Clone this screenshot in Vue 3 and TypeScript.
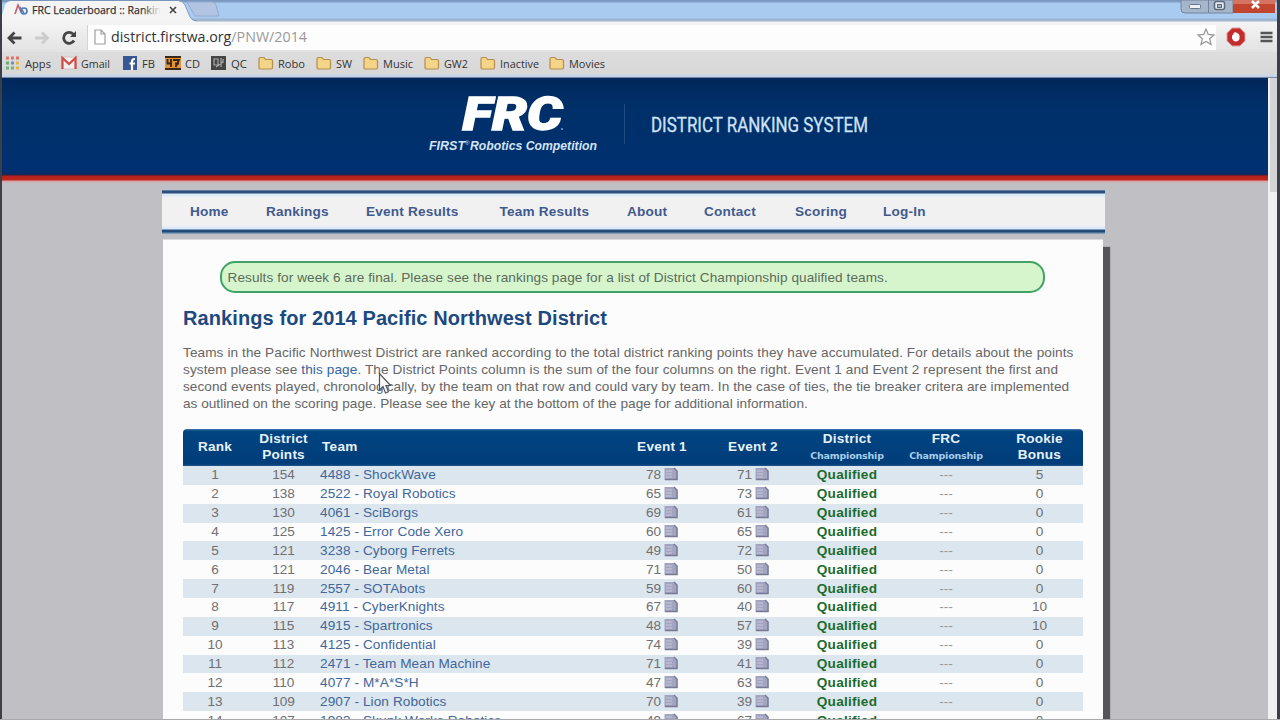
<script setup lang="ts">
interface Bookmark {
  label: string
  icon: 'apps' | 'gmail' | 'fb' | 'cd' | 'qc' | 'folder'
  slot: number
  text: number
}

interface NavItem {
  label: string
  slot: number
}

interface Row {
  points: number
  team: string
  e1: number
  e2: number
  bonus: number
}

const bookmarks: Bookmark[] = [
  { label: 'Apps', icon: 'apps', slot: 56, text: 26 },
  { label: 'Gmail', icon: 'gmail', slot: 61, text: 29 },
  { label: 'FB', icon: 'fb', slot: 43, text: 13 },
  { label: 'CD', icon: 'cd', slot: 46, text: 15 },
  { label: 'QC', icon: 'qc', slot: 47, text: 16 },
  { label: 'Robo', icon: 'folder', slot: 58, text: 27 },
  { label: 'SW', icon: 'folder', slot: 47, text: 16 },
  { label: 'Music', icon: 'folder', slot: 61, text: 30 },
  { label: 'GW2', icon: 'folder', slot: 56, text: 24 },
  { label: 'Inactive', icon: 'folder', slot: 69, text: 39 },
  { label: 'Movies', icon: 'folder', slot: 60, text: 36 },
]

const nav: NavItem[] = [
  { label: 'Home', slot: 76 },
  { label: 'Rankings', slot: 100 },
  { label: 'Event Results', slot: 133.5 },
  { label: 'Team Results', slot: 127.5 },
  { label: 'About', slot: 77 },
  { label: 'Contact', slot: 91 },
  { label: 'Scoring', slot: 88 },
  { label: 'Log-In', slot: 60 },
]

const rows: Row[] = [
  { points: 154, team: '4488 - ShockWave', e1: 78, e2: 71, bonus: 5 },
  { points: 138, team: '2522 - Royal Robotics', e1: 65, e2: 73, bonus: 0 },
  { points: 130, team: '4061 - SciBorgs', e1: 69, e2: 61, bonus: 0 },
  { points: 125, team: '1425 - Error Code Xero', e1: 60, e2: 65, bonus: 0 },
  { points: 121, team: '3238 - Cyborg Ferrets', e1: 49, e2: 72, bonus: 0 },
  { points: 121, team: '2046 - Bear Metal', e1: 71, e2: 50, bonus: 0 },
  { points: 119, team: '2557 - SOTAbots', e1: 59, e2: 60, bonus: 0 },
  { points: 117, team: '4911 - CyberKnights', e1: 67, e2: 40, bonus: 10 },
  { points: 115, team: '4915 - Spartronics', e1: 48, e2: 57, bonus: 10 },
  { points: 113, team: '4125 - Confidential', e1: 74, e2: 39, bonus: 0 },
  { points: 112, team: '2471 - Team Mean Machine', e1: 71, e2: 41, bonus: 0 },
  { points: 110, team: '4077 - M*A*S*H', e1: 47, e2: 63, bonus: 0 },
  { points: 109, team: '2907 - Lion Robotics', e1: 70, e2: 39, bonus: 0 },
  { points: 107, team: '1983 - Skunk Works Robotics', e1: 49, e2: 67, bonus: 0 },
]
</script>

<template>
  <div class="window">
    <div class="titlebar">
      <svg class="tabs" width="230" height="22" viewBox="0 0 230 22">
        <path d="M187 2 H212 Q215 2 216 5 L219 16 H195 Z" fill="#b3c4e2" stroke="#93abd0" stroke-width="1" />
        <path d="M0 22 L5 5 Q7 1 11 1 H179 Q183 1 185 5 L190 17 Q192 21 197 22 Z" fill="#f5f4f4" />
        <path d="M179 1 Q183 1 185 5 L190 17 Q192 21 197 21" fill="none" stroke="#7f9fc0" stroke-width="1" />
        <g fill="none" stroke-width="1.6">
          <path d="M15 14 L18 5 L21 12" stroke="#cf5a66" />
          <circle cx="24" cy="11" r="3" stroke="#4878b8" />
          <path d="M20 7 L24 13" stroke="#6a7fae" />
        </g>
        <text x="32" y="13.5" textLength="129" lengthAdjust="spacingAndGlyphs" class="tabtext">FRC Leaderboard :: Rankin</text>
        <rect x="142" y="2" width="22" height="17" fill="url(#tabfade)" />
        <path d="M170 7 L176 13 M176 7 L170 13" stroke="#444" stroke-width="1.6" />
        <defs>
          <linearGradient id="tabfade">
            <stop offset="0" stop-color="#f5f4f4" stop-opacity="0" />
            <stop offset="0.85" stop-color="#f5f4f4" />
          </linearGradient>
        </defs>
      </svg>
      <svg class="controls" width="97" height="15" viewBox="0 0 97 15">
        <path d="M0 0 H52 V13 H4 Q0 13 0 9 Z" fill="#a5b5ca" stroke="#75849b" />
        <path d="M27.5 0 V13" stroke="#75849b" />
        <rect x="8.500" y="4.500" width="11" height="4" rx="1" fill="#eef2f7" stroke="#6a768a" />
        <rect x="33.500" y="1.500" width="10" height="8" rx="2" fill="#e6ebf2" stroke="#5e697c" stroke-width="1.500" />
        <rect x="36.500" y="4.500" width="4" height="3" fill="#a5b5ca" stroke="#5e697c" />
        <path d="M52 0 H94 V13 H52 Z" fill="#c2452f" />
        <path d="M52 0 H94 V4 H52 Z" fill="#d47461" />
        <path d="M71 1 L78 8 M78 1 L71 8" stroke="#fff" stroke-width="2.500" />
      </svg>
    </div>

    <div class="toolbar">
      <svg class="navicons" width="88" height="26" viewBox="0 0 88 26">
        <g fill="none" stroke-width="2.800">
          <path d="M22.500 13 H10 M15.500 7.500 L10 13 L15.500 18.500" stroke="#444" />
          <path d="M36 13 H48 M43 7.500 L48.500 13 L43 18.500" stroke="#ccc" />
          <path d="M74.500 9.500 A5.500 5.500 0 1 0 75 15.500" stroke="#444" />
        </g>
        <path d="M71 12 H77 V6 Z" fill="#444" />
      </svg>
      <div class="omnibox">
        <svg class="pageicon" width="12" height="16" viewBox="0 0 12 16">
          <path d="M1 1 H7 L11 5 V15 H1 Z M7 1 V5 H11" fill="#fff" stroke="#a0a0a0" stroke-width="1.200" />
        </svg>
        <svg class="url" width="200" height="22" viewBox="0 0 200 22">
          <text x="0" y="16" textLength="196" lengthAdjust="spacingAndGlyphs">district.firstwa.org<tspan fill="#999">/PNW/2014</tspan></text>
        </svg>
        <svg class="star" width="18" height="18" viewBox="0 0 18 18">
          <path d="M9 1.200 L11.300 6.400 L17 7 L12.700 10.800 L14 16.400 L9 13.500 L4 16.400 L5.300 10.800 L1 7 L6.700 6.400 Z" fill="#fff" stroke="#999" stroke-width="1.300" />
        </svg>
      </div>
      <svg class="exticons" width="60" height="26" viewBox="0 0 60 26">
        <path d="M15.200 4 H22.800 L28 9.200 V16.800 L22.800 22 H15.200 L10 16.800 V9.200 Z" fill="#c32b2d" stroke="#dda0a0" />
        <path d="M15 12.500 Q15 10.500 16.500 10.500 V9 Q18.500 7.500 20 9 Q22.500 9.500 22.500 12 V15 Q21.500 17.500 18.500 17.500 Q16 17 15 14.500 Z" fill="#fff" />
        <path d="M43.500 9 H55.500 M43.500 13 H55.500 M43.500 17 H55.500" stroke="#555" stroke-width="2.600" />
      </svg>
    </div>

    <div class="bookmarks">
      <div v-for="b in bookmarks" :key="b.label" class="bookmark" :style="{ width: b.slot + 'px' }">
        <svg width="16" height="16" viewBox="0 0 16 16">
          <g v-if="b.icon === 'apps'">
            <path d="M1 3 H4 M6 3 H9 M11 3 H14" stroke="#d87468" stroke-width="3" />
            <path d="M1 8 H4" stroke="#6daa72" stroke-width="3" />
            <path d="M6 8 H9" stroke="#6f8fc7" stroke-width="3" />
            <path d="M11 8 H14" stroke="#e2b64d" stroke-width="3" />
            <path d="M1 13 H9" stroke="#75af76" stroke-width="3" stroke-dasharray="3 2" />
            <path d="M11 13 H14" stroke="#e2b64d" stroke-width="3" />
          </g>
          <g v-else-if="b.icon === 'gmail'">
            <rect x="0.500" y="2" width="15" height="12" fill="#f4eeee" stroke="#cfc5c5" />
            <path d="M1.500 14 V3 L8 9 L14.500 3 V14" fill="none" stroke="#d34b47" stroke-width="2.200" />
          </g>
          <g v-else-if="b.icon === 'fb'">
            <rect x="1" y="1" width="14" height="14" fill="#3a5795" />
            <path d="M10 15 V6.500 Q10 4 13 4 M7.500 8.500 H13" fill="none" stroke="#fff" stroke-width="2.200" />
          </g>
          <g v-else-if="b.icon === 'cd'">
            <rect x="0" y="1" width="16" height="14" fill="#e29437" />
            <path d="M0 2 H16 M0 14 H16" stroke="#3a2717" stroke-width="2" />
            <path d="M2.500 4 V8.500 H7 M6 4 V12 M8 5 H14 L10.500 12 M10 8.500 H14" fill="none" stroke="#3a2717" stroke-width="1.900" />
          </g>
          <g v-else-if="b.icon === 'qc'">
            <rect x="0" y="1" width="15" height="14" fill="#454545" />
            <path d="M3 4 H7 V10 H3 Z M10 3 V12 M5 12 L12 7 M12 4 V8" fill="none" stroke="#aaa" stroke-width="1.200" />
          </g>
          <g v-else>
            <path d="M1 13 V4 Q1 2.500 2.500 2.500 H6 L7.500 4.500 H13 Q14.500 4.500 14.500 6 V12.500 Q14.500 14 13 14 H2.500 Q1 14 1 13 Z" fill="#f4d486" stroke="#b38e4e" stroke-width="1.200" />
          </g>
        </svg>
        <svg class="bmtext" width="42" height="16" viewBox="0 0 42 16">
          <text x="0" y="12.500" :textLength="b.text" lengthAdjust="spacingAndGlyphs">{{ b.label }}</text>
        </svg>
      </div>
    </div>

    <div class="viewport">
      <div class="page">
        <header class="banner">
          <svg class="logo" width="180" height="70" viewBox="0 0 180 70">
            <text x="38.500" y="39" textLength="100" lengthAdjust="spacingAndGlyphs" class="frc">FRC</text>
            <circle cx="138" cy="38" r="1" fill="#7fa6d6" />
            <text x="5" y="59" textLength="36" lengthAdjust="spacingAndGlyphs" class="sub">FIRST</text>
            <text x="41" y="54" class="reg">®</text>
            <text x="46" y="59" textLength="127" lengthAdjust="spacingAndGlyphs" class="sub">Robotics Competition</text>
          </svg>
          <div class="divider"></div>
          <svg class="system" width="222" height="24" viewBox="0 0 222 24">
            <text x="1" y="17.500" textLength="217" lengthAdjust="spacingAndGlyphs">DISTRICT RANKING SYSTEM</text>
          </svg>
        </header>

        <nav class="menu">
          <a v-for="n in nav" :key="n.label" :style="{ width: n.slot + 'px' }">{{ n.label }}</a>
        </nav>

        <main class="content">
          <div class="notice">Results for week 6 are final. Please see the rankings page for a list of District Championship qualified teams.</div>
          <h1>Rankings for 2014 Pacific Northwest District</h1>
          <div class="intro">
            <div class="l1">Teams in the Pacific Northwest District are ranked according to the total district ranking points they have accumulated. For details about the points</div>
            <div class="l2">system please see <a>this page</a>. The District Points column is the sum of the four columns on the right. Event 1 and Event 2 represent the first and</div>
            <div class="l3">second events played, chronologically, by the team on that row and could vary by team. In the case of ties, the tie breaker critera are implemented</div>
            <div class="l4">as outlined on the scoring page. Please see the key at the bottom of the page for additional information.</div>
          </div>

          <div class="table">
            <div class="row head">
              <div>Rank</div>
              <div>District<br />Points</div>
              <div class="team">Team</div>
              <div>Event 1</div>
              <div>Event 2</div>
              <div>District<br /><small>Championship</small></div>
              <div>FRC<br /><small>Championship</small></div>
              <div>Rookie<br />Bonus</div>
            </div>
            <div v-for="(r, i) in rows" :key="i" class="row" :class="{ odd: i % 2 === 0 }">
              <div>{{ i + 1 }}</div>
              <div>{{ r.points }}</div>
              <div class="team">{{ r.team }}</div>
              <div v-for="(e, k) in [r.e1, r.e2]" :key="k" class="event">
                <span>{{ e }}</span>
                <svg width="14" height="14" viewBox="0 0 14 14">
                  <path d="M1 1 H10 L13.500 4 V13 H0.500 V1 Z" fill="#a3a5c0" />
                  <path d="M2 4 H8 M2 7 H8 M2 10 H8" stroke="#c8cadb" stroke-width="1.200" />
                  <path d="M10 1 L13 4 V12.500 H1" fill="none" stroke="#777994" stroke-width="1.400" />
                </svg>
              </div>
              <div class="qualified">Qualified</div>
              <div class="none">---</div>
              <div>{{ r.bonus }}</div>
            </div>
          </div>
        </main>
      </div>
      <div class="scrollbar"><div class="thumb"></div></div>
    </div>

    <svg class="cursor" width="14" height="24" viewBox="0 0 14 24">
      <path d="M1.500 1.500 V18 L5 14.500 L7.500 21 L10.500 19.700 L8 13.500 H12.500 Z" fill="#f8f8f8" stroke="#555" stroke-width="1.200" />
    </svg>
    <div class="edge left"></div>
    <div class="edge right"></div>
    <div class="edge bottom"></div>
  </div>
</template>

<style>
html,
body {
  overflow: hidden;
  background: #c0c0c4;
}
</style>

<style scoped>
.window {
  position: relative;
  width: 1280px;
  height: 720px;
  overflow: hidden;
  display: flex;
  flex-direction: column;
  box-sizing: border-box;
  font-family: 'Liberation Sans', Arial, sans-serif;
}
svg {
  display: block;
  flex: none;
  overflow: visible;
}
.titlebar {
  flex: none;
  height: 22px;
  display: flex;
  justify-content: space-between;
  background: linear-gradient(#7895bb 0, #7f9fc8 2px, #a9cbef 3px, #a9cbef 18px, #9db3d0 19px, #a2b6d0 21px, #f5f7fa 22px);
}
.controls {
  margin-right: 2px;
}
.tabtext {
  font: 11.3px 'Open Sans', sans-serif;
  fill: #333;
  stroke: #333;
  stroke-width: 0.25;
}
.toolbar {
  flex: none;
  height: 30px;
  display: flex;
  align-items: center;
  background: linear-gradient(#f4f4f4, #e2e2e2);
}
.toolbar .navicons {
  margin-top: 1px;
  margin-left: -1px;
}
.omnibox {
  width: 1129px;
  height: 25px;
  display: flex;
  align-items: center;
  background: #fdfdfd;
  box-sizing: border-box;
  border-left: 1px solid #d4d4d4;
}
.pageicon {
  margin-left: 6px;
}
.url {
  margin-left: 5px;
  font: 15px 'Open Sans', sans-serif;
}
.url text {
  fill: #333;
}
.star {
  margin-left: auto;
  margin-right: 1px;
}
.exticons {
  margin-left: 1px;
}
.bookmarks {
  flex: none;
  height: 26px;
  box-sizing: border-box;
  padding: 0 0 4px 5px;
  display: flex;
  align-items: center;
  background: linear-gradient(#dedddd 0, #d7d7d7 22px, #c8d8ea 23px, #c2d2e6 25px, #233d62 26px);
}
.bookmark {
  flex: none;
  display: flex;
  align-items: center;
  gap: 3.5px;
}
.bmtext {
  font: 11.5px 'Open Sans', sans-serif;
  margin-right: -30px;
}
.bmtext text {
  fill: #333;
}
.viewport {
  flex: 1;
  min-height: 0;
  display: flex;
}
.page {
  width: 1268px;
  overflow: hidden;
  background: #c0c0c4;
}
.banner {
  height: 105px;
  box-sizing: border-box;
  padding-left: 424px;
  display: flex;
  align-items: flex-start;
  background: linear-gradient(#00265a 0, #002b61 12px, #003069 30px, #003070 94px, #00306f 95px, #2a2348 97px, #b5201d 98px, #bd241e 102px, #d9a0a0 103px, #c9b8bc 105px);
}
.logo {
  margin-top: 13px;
}
.frc {
  font: italic 900 46px Roboto, sans-serif;
  fill: #fff;
  stroke: #fff;
  stroke-width: 1.4;
}
.sub {
  font: italic bold 12px 'Liberation Sans', Arial, sans-serif;
  fill: #d5e3f4;
}
.reg {
  font: 6px 'Liberation Sans', Arial, sans-serif;
  fill: #d5e3f4;
}
.divider {
  width: 1px;
  height: 40px;
  margin: 26px 0 0 20px;
  background: #204a82;
}
.system {
  margin: 36px 0 0 25px;
  font: 20px Roboto, sans-serif;
}
.system text {
  fill: #cfe2f8;
  stroke: #cfe2f8;
  stroke-width: 0.3;
}
.menu {
  width: 943px;
  height: 44px;
  margin: 7px 0 0 162px;
  box-sizing: border-box;
  padding: 0 0 1px 28px;
  display: flex;
  align-items: center;
  font-size: 13.6px;
  font-weight: bold;
  letter-spacing: 0.2px;
  color: #415a8e;
  background: linear-gradient(#8fa9c6 0, #2c4e7b 1px, #2c4e7b 3px, #d6e8fa 4px, #f1f1f2 8px, #f1f1f2 35px, #d6e8fa 39px, #27507f 40px, #1f4673 42px, #7c9cb8 43px);
}
.menu a {
  flex: none;
  white-space: nowrap;
}
.content {
  width: 940px;
  height: 500px;
  margin: 5px 0 0 163px;
  box-sizing: border-box;
  padding: 23px 20px 0;
  background: #fcfcfd;
  border-top: 1px solid #dcdce0;
  box-shadow: 7px 8px 1px #55555a;
}
.notice {
  width: 825px;
  height: 32px;
  margin-left: 37px;
  margin-top: -2px;
  box-sizing: border-box;
  border: 2px solid #3fa463;
  border-radius: 15px;
  padding-left: 5.5px;
  line-height: 29px;
  font-size: 13.6px;
  letter-spacing: 0.074px;
  color: #5c6b5a;
  background: #d6f5cd;
  white-space: nowrap;
}
h1 {
  margin: 12px 0 0;
  font-size: 20px;
  line-height: 26px;
  letter-spacing: 0.09px;
  color: #1c4a80;
  white-space: nowrap;
}
.intro {
  margin-top: 13px;
  font-size: 13.6px;
  line-height: 17px;
  color: #666;
  white-space: nowrap;
}
.intro a {
  color: #35659f;
}
.l1 {
  letter-spacing: 0.094px;
}
.l2 {
  letter-spacing: 0.107px;
}
.l3 {
  letter-spacing: 0.062px;
}
.l4 {
  letter-spacing: 0.02px;
}
.table {
  margin-top: 17px;
}
.row {
  height: 18.87px;
  display: grid;
  grid-template-columns: 64px 73px 296px 92px 90px 98px 100px 87px;
  align-items: center;
  text-align: center;
  font-size: 13.6px;
  line-height: 18px;
  color: #707070;
  background: #fcfcfd;
}
.odd {
  background: #dce6ee;
}
.head {
  height: 37px;
  box-sizing: border-box;
  padding-bottom: 2px;
  font-weight: bold;
  line-height: 16px;
  letter-spacing: 0.2px;
  color: #e8f1fb;
  background: linear-gradient(#4b7fae 0, #004482 2px, #003d79 35px, #24588c 37px);
  border-radius: 4px 4px 0 0;
}
.head small {
  font: bold 9.5px 'DejaVu Sans', sans-serif;
  letter-spacing: -0.2px;
  color: #a9cdea;
}
.row .team {
  text-align: left;
  letter-spacing: 0.09px;
  color: #41679b;
}
.head .team {
  padding-left: 2px;
  letter-spacing: 0.3px;
  color: #e8f1fb;
}
.event {
  display: flex;
  align-items: center;
  justify-content: center;
  gap: 3px;
}
.event svg {
  margin-top: -2px;
}
.row .qualified {
  font-weight: bold;
  letter-spacing: 0.25px;
  color: #1c6b2c;
}
.none {
  color: #999;
}
.scrollbar {
  width: 9px;
  background: #f0f0f3;
}
.thumb {
  height: 114px;
  margin-left: 2px;
  background: #d4d4d6;
}
.cursor {
  position: absolute;
  left: 378px;
  top: 372px;
}
.edge {
  position: absolute;
  background: #3c3f46;
}
.left {
  left: 0;
  top: 0;
  width: 2px;
  height: 720px;
}
.right {
  right: 0;
  top: 0;
  width: 3px;
  height: 720px;
}
.bottom {
  left: 0;
  bottom: 0;
  width: 1280px;
  height: 1px;
  background: #a9a9ac;
}
</style>
